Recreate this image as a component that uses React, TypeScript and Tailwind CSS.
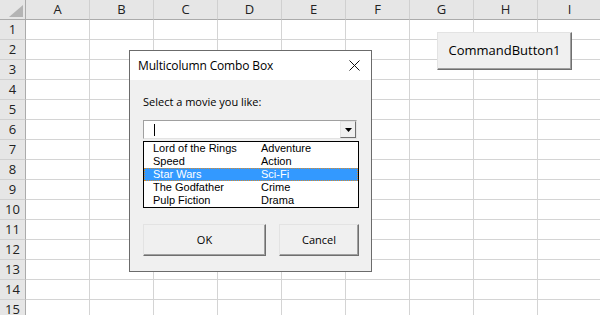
import React from 'react'

const columns = ['A', 'B', 'C', 'D', 'E', 'F', 'G', 'H', 'I']
const rows = Array.from({ length: 15 }, (_, i) => i + 1)

const movies = [
  ['Lord of the Rings', 'Adventure'],
  ['Speed', 'Action'],
  ['Star Wars', 'Sci-Fi'],
  ['The Godfather', 'Crime'],
  ['Pulp Fiction', 'Drama'],
]

export default function App() {
  return (
    <div className="relative w-[600px] h-[315px] overflow-hidden bg-white font-['Open_Sans',sans-serif] text-[#222]">
      {/* sheet grid */}
      <div className="grid grid-cols-[26px_repeat(9,64px)] grid-rows-[20px_repeat(15,20px)]">
        <div className="relative bg-[#e6e6e6] border-r border-b border-[#ababab]">
          <svg className="absolute right-[2px] bottom-[2px]" width="14" height="12" viewBox="0 0 14 12">
            <polygon points="14,0 14,12 0,12" fill="#b4b4b4" />
          </svg>
        </div>
        {columns.map((c) => (
          <div
            key={c}
            className="flex items-center justify-center bg-[#e6e6e6] border-r border-b border-r-[#d0d0d0] border-b-[#ababab] text-[13px] leading-none"
          >
            {c}
          </div>
        ))}
        {rows.map((r) => (
          <React.Fragment key={r}>
            <div className="flex items-center justify-center bg-[#e6e6e6] border-r border-b border-r-[#ababab] border-b-[#d0d0d0] text-[13px] leading-none">
              {r}
            </div>
            {columns.map((c) => (
              <div key={c} className="border-r border-b border-[#d4d4d4]" />
            ))}
          </React.Fragment>
        ))}
      </div>

      {/* CommandButton1 */}
      <div className="absolute left-[437px] top-[32px] w-[135px] h-[38px] flex items-center justify-center bg-[#f0f0f0] border border-t-[#e3e3e3] border-l-[#e3e3e3] border-r-[#6f6f6f] border-b-[#6f6f6f] shadow-[inset_-1px_-1px_0_#a0a0a0] text-[13px] text-black">
        CommandButton1
      </div>

      {/* dialog */}
      <div className="absolute left-[129px] top-[50px] w-[243px] h-[222px] border border-[#6b6b6b] bg-[#f0f0f0] flex flex-col">
        <div className="h-[29px] bg-white flex items-center justify-between pl-[8px] pr-[11px]">
          <span className="text-[12px] tracking-[-0.15px] text-black">Multicolumn Combo Box</span>
          <svg width="11" height="11" viewBox="0 0 11 11">
            <path d="M0.5 0.5 L10.5 10.5 M10.5 0.5 L0.5 10.5" stroke="#111" strokeWidth="1" />
          </svg>
        </div>

        <div className="flex flex-col pl-[13px] pt-[15px]">
          <div className="h-[14px] leading-[14px] text-[11px] text-black">Select a movie you like:</div>

          {/* combo */}
          <div className="mt-[11px] w-[214px] h-[19px] flex bg-white border border-t-[#a0a0a0] border-l-[#a0a0a0] border-r-[#e3e3e3] border-b-[#e3e3e3]">
            <div className="flex-1 flex items-center pl-[10px]">
              <div className="w-px h-[12px] bg-black" />
            </div>
            <div className="w-[16px] h-full flex items-center justify-center bg-[#f0f0f0] border border-t-[#e3e3e3] border-l-[#e3e3e3] border-r-[#6f6f6f] border-b-[#6f6f6f]">
              <svg width="7" height="4" viewBox="0 0 7 4">
                <polygon points="0,0 7,0 3.5,4" fill="#000" />
              </svg>
            </div>
          </div>

          {/* list */}
          <div className="mt-[2px] w-[216px] h-[67px] border border-black bg-white text-[11px] leading-[13px] font-['Liberation_Sans',sans-serif]">
            {movies.map(([title, genre], i) => (
              <div
                key={title}
                className={
                  i === 2
                    ? 'flex h-[13px] items-center bg-[#3399ff] text-white outline-1 outline-dotted outline-offset-[-1px] outline-[#d88a2a]'
                    : 'flex h-[13px] items-center text-black'
                }
              >
                <span className="w-[117px] pl-[9px]">{title}</span>
                <span>{genre}</span>
              </div>
            ))}
          </div>

          {/* buttons */}
          <div className="mt-[16px] flex gap-[13px] text-[11px] text-black">
            <div className="w-[123px] h-[32px] flex items-center justify-center bg-[#f0f0f0] border border-t-[#e3e3e3] border-l-[#e3e3e3] border-r-[#6f6f6f] border-b-[#6f6f6f] shadow-[inset_-1px_-1px_0_#a0a0a0]">
              OK
            </div>
            <div className="w-[80px] h-[32px] flex items-center justify-center bg-[#f0f0f0] border border-t-[#e3e3e3] border-l-[#e3e3e3] border-r-[#6f6f6f] border-b-[#6f6f6f] shadow-[inset_-1px_-1px_0_#a0a0a0]">
              Cancel
            </div>
          </div>
        </div>
      </div>
    </div>
  )
}
